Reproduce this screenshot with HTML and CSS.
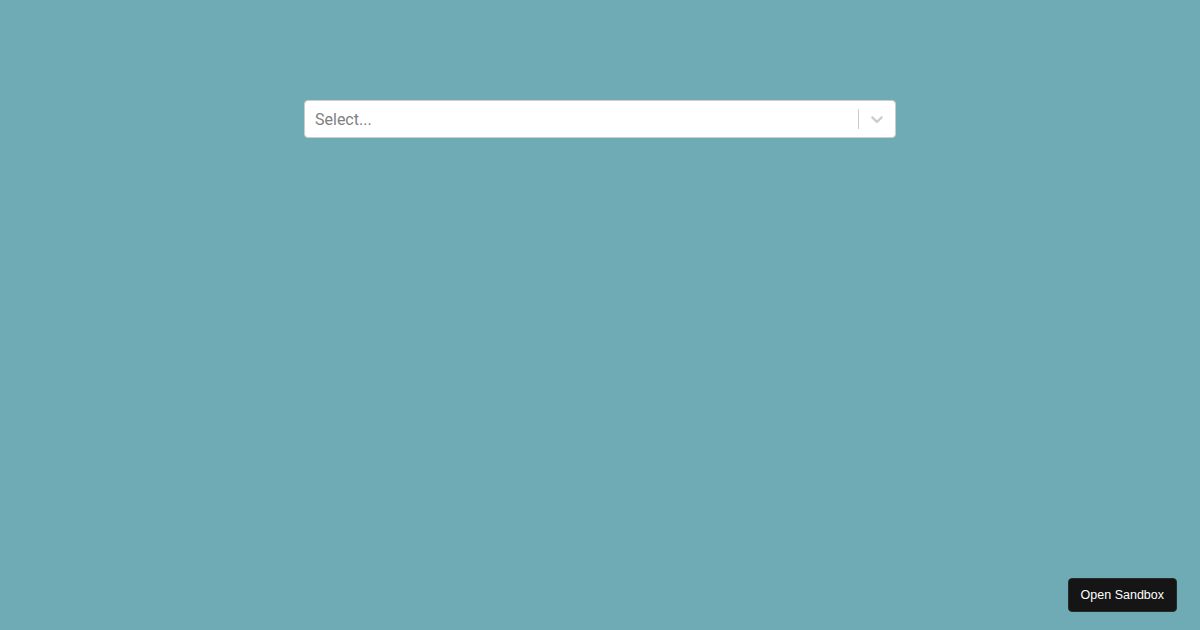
FILE: index.html
```html
<!DOCTYPE HTML>
<html lang="en">
  <head>
    <title>Select</title>
    <meta charset="utf-8">
    <link rel="stylesheet" href="styles.css">
  </head>
  <body>

  <div class="app">
    <div class="select">
      <div class="select-control">
        <div class="select-value">
          <span class="select-placeholder">Select...</span>
        </div>
        <div class="select-indicators">
          <span class="select-separator"></span>
          <div class="select-dropdown">
            <svg height="20" width="20" viewBox="0 0 20 20" aria-hidden="true"><path d="M4.516 7.548c0.436-0.446 1.043-0.481 1.576 0l3.908 3.747 3.908-3.747c0.533-0.481 1.141-0.446 1.574 0 0.436 0.445 0.408 1.197 0 1.615-0.406 0.418-4.695 4.502-4.695 4.502-0.217 0.223-0.502 0.335-0.787 0.335s-0.57-0.112-0.789-0.335c0 0-4.287-4.084-4.695-4.502s-0.436-1.17 0-1.615z"></path></svg>
          </div>
        </div>
      </div>
    </div>
  </div>

  <a class="sandbox-btn" href="#">Open Sandbox</a>

  </body>
</html>
```

FILE: styles.css
```css
html {
  height: 100%;
}
body {
  margin: 0;
  padding: 0;
  height: 100%;
  background: #6fabb4;
  font-family: Roboto, "Liberation Sans", sans-serif;
}

.app {
  display: flex;
  justify-content: center;
  padding-top: 100px;
}

.select {
  width: 592px;
  font-size: 16px;
}

.select-control {
  display: flex;
  align-items: center;
  justify-content: space-between;
  min-height: 38px;
  box-sizing: border-box;
  background-color: #fff;
  border: 1px solid hsl(0, 0%, 80%);
  border-radius: 4px;
}

.select-value {
  flex: 1;
  padding: 2px 8px;
}

.select-placeholder {
  margin: 0 2px;
  color: hsl(0, 0%, 50%);
}

.select-indicators {
  display: flex;
  align-items: center;
  align-self: stretch;
}

.select-separator {
  align-self: stretch;
  width: 1px;
  margin: 8px 0;
  background-color: hsl(0, 0%, 80%);
}

.select-dropdown {
  display: flex;
  padding: 8px;
  color: hsl(0, 0%, 80%);
}

.select-dropdown svg {
  fill: currentColor;
}

.sandbox-btn {
  position: fixed;
  right: 23px;
  bottom: 18px;
  display: block;
  padding: 0 12px;
  height: 34px;
  line-height: 32px;
  background: #151515;
  border: 1px solid #2a2a2a;
  box-sizing: border-box;
  border-radius: 4px;
  color: #fff;
  font-family: "Liberation Sans", Arial, sans-serif;
  font-size: 12.5px;
  text-decoration: none;
}
```
